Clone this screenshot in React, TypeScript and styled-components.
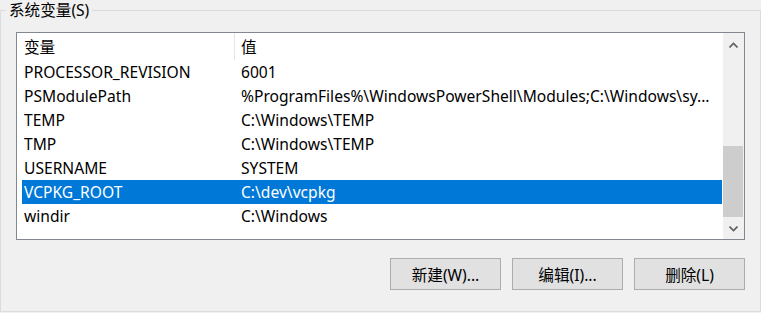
import React from 'react'
import styled, {createGlobalStyle} from 'styled-components'

const GlobalStyle = createGlobalStyle`
  html, body {
    margin: 0;
    padding: 0;
    background: #f0f0f0;
  }
  body {
    font-family: "Noto Sans", "Noto Sans CJK SC", sans-serif;
    font-size: 15.6px;
    color: #000;
  }
`

const Window = styled.div`
  width: 761px;
  height: 313px;
  background: #f0f0f0;
  padding-top: 10px;
  box-sizing: border-box;
  overflow: hidden;
`

const GroupBox = styled.div`
  position: relative;
  width: 761px;
  height: 302px;
  box-sizing: border-box;
  border: 1px solid #dcdcdc;
  padding: 21px 15px 0 15px;
  display: flex;
  flex-direction: column;
`

const GroupTitle = styled.span`
  position: absolute;
  top: -11px;
  left: 5px;
  padding: 0 3px;
  background: #f0f0f0;
  line-height: 20px;
  white-space: nowrap;
`

const ListBox = styled.div`
  width: 729px;
  height: 208px;
  box-sizing: border-box;
  border: 1px solid #828790;
  background: #fff;
  display: flex;
  overflow: hidden;
`

const ListContent = styled.div`
  flex: 1;
  display: flex;
  flex-direction: column;
  min-width: 0;
`

const Header = styled.div`
  display: flex;
  height: 27px;
  align-items: center;
  flex-shrink: 0;
`

const HeaderCell = styled.div<{$width?: number; $divider?: boolean}>`
  width: ${({$width}) => ($width ? `${$width}px` : 'auto')};
  flex: ${({$width}) => ($width ? 'none' : '1')};
  height: 100%;
  display: flex;
  align-items: center;
  padding-left: ${({$divider}) => ($divider ? '7px' : '6px')};
  box-sizing: border-box;
  border-right: ${({$divider}) => ($divider ? '1px solid #e5e5e5' : 'none')};
`

const Rows = styled.div`
  display: flex;
  flex-direction: column;
  padding-left: 5px;
`

const Row = styled.div<{$selected?: boolean}>`
  display: flex;
  height: 24px;
  align-items: center;
  background: ${({$selected}) => ($selected ? '#0078d7' : 'transparent')};
  color: ${({$selected}) => ($selected ? '#fff' : '#000')};
  white-space: nowrap;
`

const NameCell = styled.div`
  width: 213px;
  flex: none;
  padding-left: 2px;
  box-sizing: border-box;
  overflow: hidden;
`

const ValueCell = styled.div`
  flex: 1;
  padding-left: 6px;
  overflow: hidden;
`

const ScrollBar = styled.div`
  width: 21px;
  flex: none;
  background: #f0f0f0;
  display: flex;
  flex-direction: column;
  border-left: 1px solid #fff;
`

const ScrollArrow = styled.div`
  height: 24px;
  display: flex;
  align-items: center;
  justify-content: center;
  flex: none;
`

const Track = styled.div`
  flex: 1;
  display: flex;
  flex-direction: column;
  padding-top: 89px;
`

const Thumb = styled.div`
  height: 71px;
  margin: 0 1px 0 0;
  background: #cdcdcd;
`

const ButtonBar = styled.div`
  display: flex;
  justify-content: flex-end;
  gap: 11px;
  margin-top: 18px;
  width: 729px;
`

const Button = styled.button`
  width: 111px;
  height: 32px;
  box-sizing: border-box;
  border: 1px solid #adadad;
  background: #e1e1e1;
  font-family: "Noto Sans", "Noto Sans CJK SC", sans-serif;
  font-size: 15.6px;
  color: #000;
  padding: 0;
`

const Chevron = ({up}: {up?: boolean}) => (
  <svg width="9" height="6" viewBox="0 0 9 6">
    <path
      d={up ? 'M0.5 5.5 L4.5 1.5 L8.5 5.5' : 'M0.5 0.5 L4.5 4.5 L8.5 0.5'}
      fill="none"
      stroke="#606060"
      strokeWidth="1.6"
    />
  </svg>
)

const vars = [
  {name: 'PROCESSOR_REVISION', value: '6001'},
  {name: 'PSModulePath', value: '%ProgramFiles%\\WindowsPowerShell\\Modules;C:\\Windows\\sy...'},
  {name: 'TEMP', value: 'C:\\Windows\\TEMP'},
  {name: 'TMP', value: 'C:\\Windows\\TEMP'},
  {name: 'USERNAME', value: 'SYSTEM'},
  {name: 'VCPKG_ROOT', value: 'C:\\dev\\vcpkg'},
  {name: 'windir', value: 'C:\\Windows'},
]

const App = () => {
  const selected = 'VCPKG_ROOT'

  return (
    <>
      <GlobalStyle/>
      <Window>
        <GroupBox>
          <GroupTitle>系统变量(S)</GroupTitle>
          <ListBox>
            <ListContent>
              <Header>
                <HeaderCell $width={218} $divider>变量</HeaderCell>
                <HeaderCell>值</HeaderCell>
              </Header>
              <Rows>
                {vars.map((v) => (
                  <Row key={v.name} $selected={v.name === selected}>
                    <NameCell>{v.name}</NameCell>
                    <ValueCell>{v.value}</ValueCell>
                  </Row>
                ))}
              </Rows>
            </ListContent>
            <ScrollBar>
              <ScrollArrow><Chevron up/></ScrollArrow>
              <Track>
                <Thumb/>
              </Track>
              <ScrollArrow><Chevron/></ScrollArrow>
            </ScrollBar>
          </ListBox>
          <ButtonBar>
            <Button>新建(W)...</Button>
            <Button>编辑(I)...</Button>
            <Button>删除(L)</Button>
          </ButtonBar>
        </GroupBox>
      </Window>
    </>
  )
}

export default App
